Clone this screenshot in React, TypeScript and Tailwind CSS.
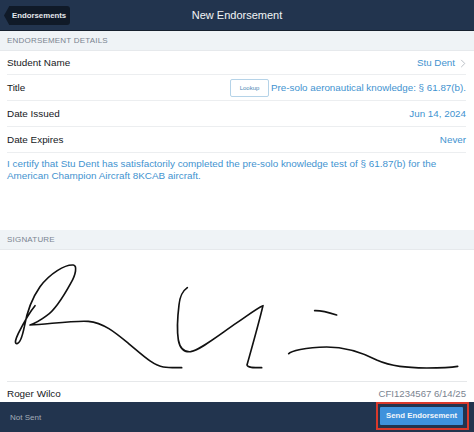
import React from 'react';

const Row = ({ label, children, first = false }: { label: string; children?: React.ReactNode; first?: boolean }) => (
  <div className={`${first ? 'h-[24px]' : 'h-[26px]'} pt-[1px] flex items-center justify-between border-b border-[#eceef0]`}>
    <span className="text-[9.9px] text-[#15181c]">{label}</span>
    {children}
  </div>
);

const Section = ({ title }: { title: string }) => (
  <div className="h-[20px] shrink-0 pt-[1px] bg-[#eff3f6] border-b border-[#e6e9ec] pl-[7px] flex items-center text-[8px] tracking-[0.2px] text-[#7a8490]">
    {title}
  </div>
);

const Signature = () => (
  <svg viewBox="0 0 1422 378" className="block w-full h-[126px]" fill="none" stroke="#111" strokeWidth="5" strokeLinecap="round" strokeLinejoin="round">
    <path d="M105 152C90 170 70 205 55 235C47 252 43 265 50 266C60 266 68 240 73 215C80 175 92 135 120 95C150 55 195 28 220 30C232 32 228 58 212 85C190 125 165 165 140 182C120 197 105 205 90 210C140 208 220 196 265 199C310 203 345 232 385 265C425 298 460 332 490 336C510 339 530 338 545 338" />
    <path d="M562 98C548 108 540 120 537 150C532 190 532 235 535 255C540 282 552 292 572 290C600 285 650 245 711 203C745 180 770 160 789 152C775 210 755 280 741 330C742 338 760 338 785 338" />
    <path d="M944 167C965 166 985 172 1010 180" />
    <path d="M866 296C872 288 915 277 980 276C1040 276 1085 292 1130 315C1175 335 1220 338 1280 339C1320 339 1350 338 1373 334" />
  </svg>
);

export default function App() {
  return (
    <div className="w-[474px] h-[432px] bg-white flex flex-col overflow-hidden font-['Liberation_Sans',Arial,sans-serif]">
      {/* Header */}
      <div className="h-[31px] pt-[1px] bg-[#22344e] border-b border-[#16202e] relative flex items-center justify-center shrink-0">
        <span className="text-[11px] text-[#f2f4f6]">New Endorsement</span>
        <div className="absolute left-[4px] top-[6px] h-[19px] w-[66px] bg-[#101a28] rounded-r-[3px] flex items-center pl-[8px] [clip-path:polygon(8%_0,100%_0,100%_100%,8%_100%,0_50%)]">
          <span className="text-[7.8px] font-bold text-[#e4e8ec] whitespace-nowrap">Endorsements</span>
        </div>
      </div>

      <Section title="ENDORSEMENT DETAILS" />

      {/* Details */}
      <div className="pl-[7px] pr-[8px] shrink-0">
        <Row label="Student Name" first>
          <span className="flex items-center gap-[5px] text-[9.8px] text-[#3f93d0]">
            Stu Dent
            <svg width="6" height="9" viewBox="0 0 6 10" fill="none" stroke="#b9bec4" strokeWidth="1.1">
              <path d="M1 1l4 4-4 4" />
            </svg>
          </span>
        </Row>
        <Row label="Title">
          <div className="flex items-center gap-[2px]">
            <button className="w-[39px] h-[18px] border border-[#b5d3e8] rounded-[2px] text-[6px] text-[#4a88b4]">Lookup</button>
            <span className="text-[9.8px] text-[#3f93d0]">Pre-solo aeronautical knowledge: § 61.87(b).</span>
          </div>
        </Row>
        <Row label="Date Issued">
          <span className="text-[9.8px] text-[#3f93d0]">Jun 14, 2024</span>
        </Row>
        <Row label="Date Expires">
          <span className="text-[9.8px] text-[#3f93d0]">Never</span>
        </Row>
      </div>

      {/* Certification text */}
      <p className="h-[77px] shrink-0 pl-[7px] pr-[8px] pt-[5px] text-[9.9px] leading-[12px] text-[#3f93d0]">
        I certify that Stu Dent has satisfactorily completed the pre-solo knowledge test of § 61.87(b) for the American Champion Aircraft 8KCAB aircraft.
      </p>

      <Section title="SIGNATURE" />

      <div className="flex-1 min-h-0 pt-[5px]">
        <Signature />
      </div>

      {/* Signer */}
      <div className="mx-[7px] pr-[1px] pt-[4px] h-[21px] shrink-0 border-t border-[#e6e8ea] flex items-center justify-between">
        <span className="text-[9.9px] text-[#15181c]">Roger Wilco</span>
        <span className="text-[9.6px] text-[#7a8490]">CFI1234567 6/14/25</span>
      </div>

      {/* Footer */}
      <div className="h-[30px] shrink-0 bg-[#22344e] pl-[10px] pr-[5px] flex items-center justify-between">
        <span className="text-[8px] pt-[1px] text-[#a3adb8]">Not Sent</span>
        <div className="self-start w-[93px] h-[28px] border-[2px] border-[#d9392b] pl-[2px] pr-[4px] flex items-center">
          <button className="w-full h-[18px] bg-[#3f92dc] rounded-[1px] text-[7.8px] font-bold text-[#f2f6fa] whitespace-nowrap flex items-center justify-center">
            Send Endorsement
          </button>
        </div>
      </div>
    </div>
  );
}
